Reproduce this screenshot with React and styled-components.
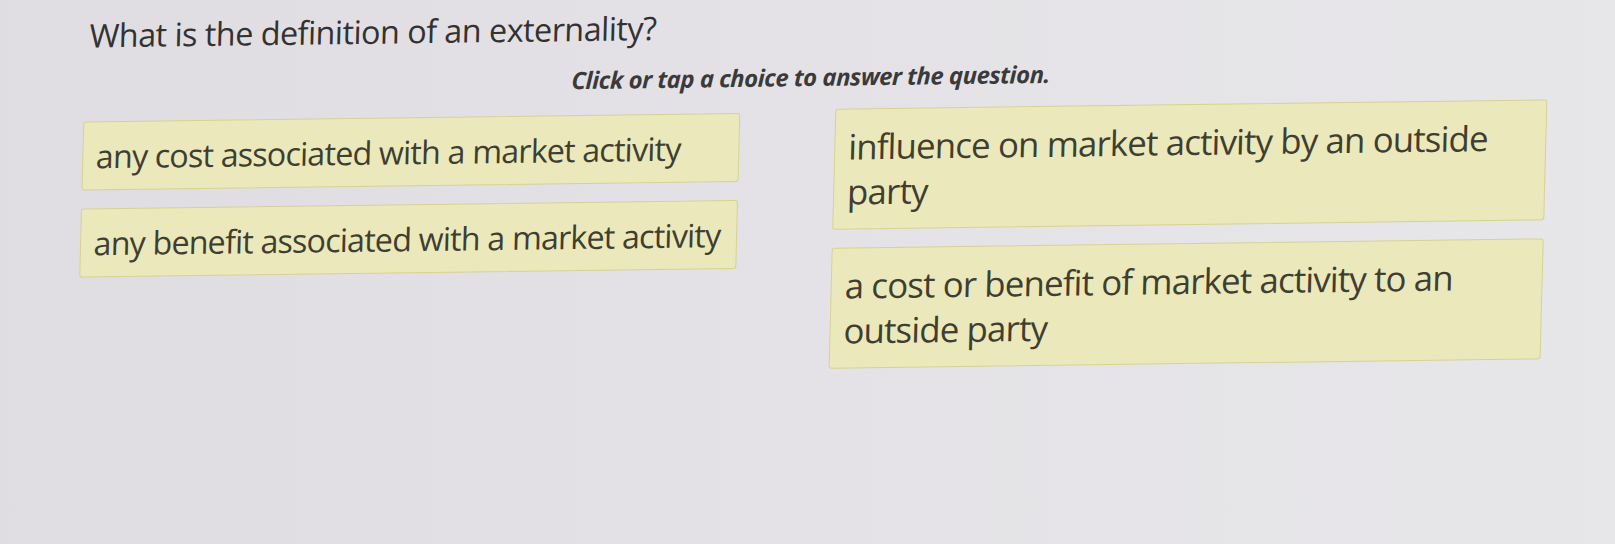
import React from "react";
import styled, { createGlobalStyle } from "styled-components";

const Global = createGlobalStyle`
  html, body { margin: 0; padding: 0; }
  body {
    background: linear-gradient(90deg, #dfdde2 0%, #e4e2e6 50%, #e7e6e9 100%);
    font-family: "Open Sans", "Noto Sans", sans-serif;
    color: #3b3a33;
    overflow: hidden;
  }
`;

const Page = styled.div`
  width: 1615px;
  height: 544px;
  box-sizing: border-box;
  padding-top: 3px;
  transform: skew(-1.5deg, -0.75deg);
  transform-origin: 808px 200px;
`;

const Title = styled.h1`
  margin: 0 0 0 85px;
  font-size: 32.4px;
  font-weight: 400;
  letter-spacing: -0.55px;
  line-height: 44px;
  color: #33322f;
`;

const Hint = styled.p`
  margin: 16px 0 0 0;
  text-align: center;
  font-size: 23.8px;
  font-weight: 700;
  font-style: italic;
  letter-spacing: -0.45px;
  line-height: 28px;
  color: #3a3a3a;
`;

const Choices = styled.div`
  display: grid;
  grid-template-columns: 657px 712px;
  column-gap: 95px;
  margin-top: 18px;
  padding-left: 81px;
  align-items: start;
`;

const Column = styled.div`
  display: flex;
  flex-direction: column;
  gap: 18px;
  margin-top: ${(p) => p.$offset}px;
`;

const Choice = styled.button`
  display: block;
  width: 100%;
  box-sizing: border-box;
  text-align: left;
  padding: ${(p) => (p.$wide ? "14px 12px 15px 13px" : "11.5px 12px 10.5px 12.5px")};
  background: #ebe9bc;
  border: 1.5px solid #d6d293;
  border-radius: 3px;
  font-family: "Open Sans", "Noto Sans", sans-serif;
  font-size: ${(p) => (p.$wide ? 34.8 : 32.3)}px;
  letter-spacing: -0.85px;
  line-height: 45px;
  color: #3f3e30;
  cursor: pointer;
`;

export default function App() {
  return (
    <>
      <Global />
      <Page>
        <Title>What is the definition of an externality?</Title>
        <Hint>Click or tap a choice to answer the question.</Hint>
        <Choices>
          <Column $offset={2.5}>
            <Choice>any cost associated with a market activity</Choice>
            <Choice>any benefit associated with a market activity</Choice>
          </Column>
          <Column $offset={0}>
            <Choice $wide>influence on market activity by an outside party</Choice>
            <Choice $wide>a cost or benefit of market activity to an outside party</Choice>
          </Column>
        </Choices>
      </Page>
    </>
  );
}
